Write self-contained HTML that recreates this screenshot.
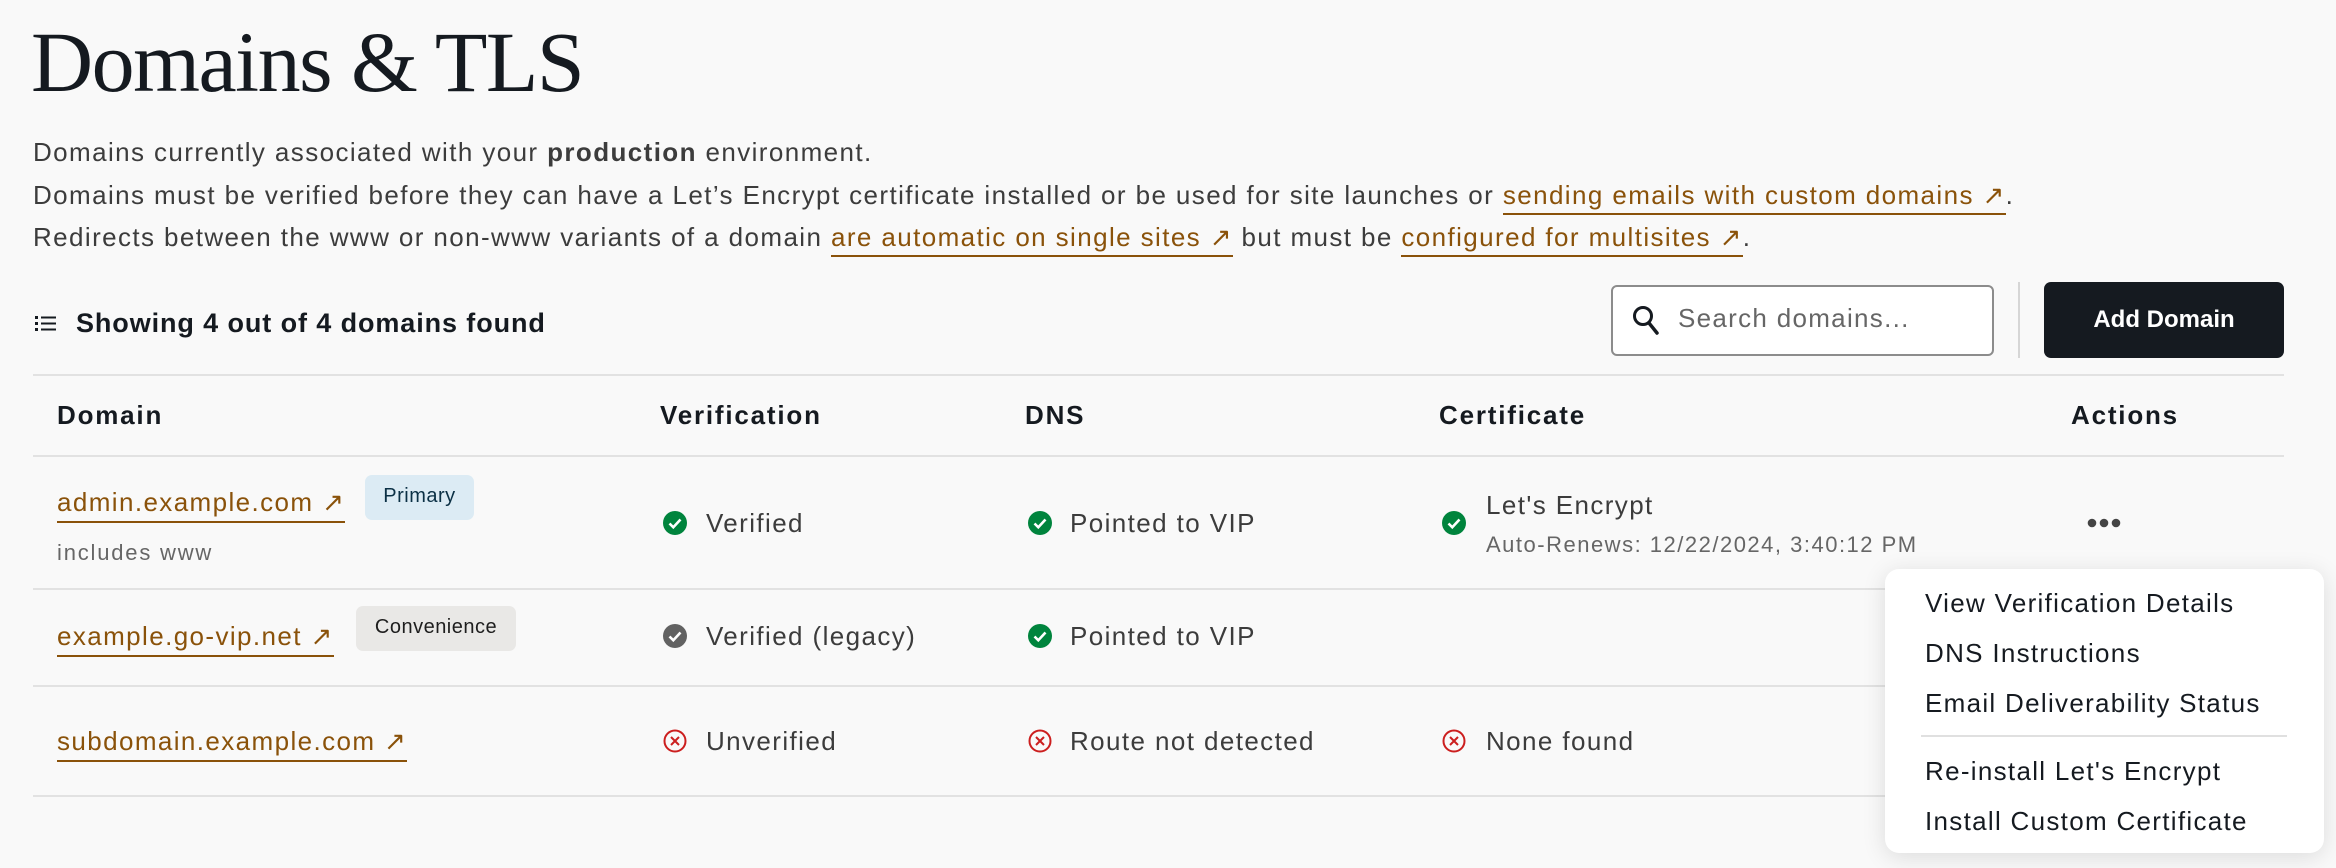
<!DOCTYPE html>
<html><head><meta charset="utf-8"><style>
*{margin:0;padding:0;box-sizing:border-box}
html,body{width:2336px;height:868px;overflow:hidden;background:#f9f9f9;font-family:"Liberation Sans",sans-serif;color:#1e1e1e}
.a{position:absolute;white-space:nowrap}
h1{position:absolute;left:31px;top:12px;font-family:"Liberation Serif",serif;font-weight:400;font-size:86px;color:#151a20;letter-spacing:-1.5px}
.p{font-size:26px;color:#3c3c3c;left:33px;letter-spacing:1.4px}
.l{color:#8a520a;border-bottom:2px solid #8a520a;padding-bottom:3px}
.th{font-weight:700;font-size:26px;color:#151a20;top:400px;letter-spacing:1.8px}
.hr{position:absolute;left:33px;width:2251px;height:2px;background:#e2e2e2}
.t{font-size:26px;color:#3c3c3c;letter-spacing:1.4px}
.ic{position:absolute;width:24px;height:24px}
.m{font-size:26px;color:#151a20;left:1925px;letter-spacing:1.3px}
</style></head><body>
<h1>Domains &amp; TLS</h1>
<div class="a p" style="top:137px">Domains currently associated with your <b>production</b> environment.</div>
<div class="a p" style="top:180px">Domains must be verified before they can have a Let’s Encrypt certificate installed or be used for site launches or <span class="l">sending emails with custom domains ↗</span>.</div>
<div class="a p" style="top:222px">Redirects between the www or non-www variants of a domain <span class="l">are automatic on single sites ↗</span> but must be <span class="l">configured for multisites ↗</span>.</div>

<svg class="a" style="left:35px;top:315px" width="22" height="16" viewBox="0 0 22 16"><g fill="#151a20"><rect x="0" y="1" width="3" height="3"/><rect x="0" y="7" width="3" height="3"/><rect x="0" y="13" width="3" height="3"/><rect x="6" y="1.5" width="15" height="2"/><rect x="6" y="7.5" width="15" height="2"/><rect x="6" y="13.5" width="15" height="2"/></g></svg>
<div class="a" style="left:76px;top:308px;font-size:27px;font-weight:700;color:#151a20;letter-spacing:0.9px">Showing 4 out of 4 domains found</div>

<div class="a" style="left:1611px;top:285px;width:383px;height:71px;border:2px solid #8c8c8c;border-radius:6px;background:#fff"></div>
<svg class="a" style="left:1632px;top:305px" width="28" height="32" viewBox="0 0 28 32"><circle cx="11" cy="11" r="8.5" fill="none" stroke="#151a20" stroke-width="3"/><line x1="17" y1="18" x2="25" y2="28" stroke="#151a20" stroke-width="3.5" stroke-linecap="round"/></svg>
<div class="a" style="left:1678px;top:303px;font-size:26px;color:#666;letter-spacing:1.3px">Search domains...</div>
<div class="a" style="left:2018px;top:282px;width:2px;height:76px;background:#d6d6d6"></div>
<div class="a" style="left:2044px;top:282px;width:240px;height:76px;background:#151a20;border-radius:7px;color:#fff;font-size:24px;font-weight:700;text-align:center;line-height:76px">Add Domain</div>

<div class="hr" style="top:374px"></div>
<div class="a th" style="left:57px">Domain</div>
<div class="a th" style="left:660px">Verification</div>
<div class="a th" style="left:1025px">DNS</div>
<div class="a th" style="left:1439px">Certificate</div>
<div class="a th" style="left:2071px">Actions</div>
<div class="hr" style="top:455px"></div>

<!-- row1 -->
<div class="a t" style="left:57px;top:487px"><span class="l" style="padding-bottom:4px">admin.example.com ↗</span></div>
<div class="a" style="left:365px;top:475px;width:109px;height:45px;background:#dcebf4;border-radius:7px;font-size:20px;color:#0b3045;text-align:center;line-height:43px;letter-spacing:0.5px">Primary</div>
<div class="a" style="left:57px;top:540px;font-size:22px;color:#666;letter-spacing:1.8px">includes www</div>
<svg class="ic" style="left:663px;top:511px" viewBox="0 0 24 24"><circle cx="12" cy="12" r="12" fill="#00843d"/><path d="M6.5 12.5l3.8 3.8L17.5 8.5" fill="none" stroke="#fff" stroke-width="2.6"/></svg>
<div class="a t" style="left:706px;top:508px">Verified</div>
<svg class="ic" style="left:1028px;top:511px" viewBox="0 0 24 24"><circle cx="12" cy="12" r="12" fill="#00843d"/><path d="M6.5 12.5l3.8 3.8L17.5 8.5" fill="none" stroke="#fff" stroke-width="2.6"/></svg>
<div class="a t" style="left:1070px;top:508px">Pointed to VIP</div>
<svg class="ic" style="left:1442px;top:511px" viewBox="0 0 24 24"><circle cx="12" cy="12" r="12" fill="#00843d"/><path d="M6.5 12.5l3.8 3.8L17.5 8.5" fill="none" stroke="#fff" stroke-width="2.6"/></svg>
<div class="a t" style="left:1486px;top:490px">Let's Encrypt</div>
<div class="a" style="left:1486px;top:532px;font-size:22px;color:#666;letter-spacing:1.5px">Auto-Renews: 12/22/2024, 3:40:12 PM</div>
<svg class="a" style="left:2087px;top:518px" width="34" height="10"><circle cx="5" cy="5" r="4.3" fill="#444"/><circle cx="17" cy="5" r="4.3" fill="#444"/><circle cx="29" cy="5" r="4.3" fill="#444"/></svg>
<div class="hr" style="top:588px"></div>

<!-- row2 -->
<div class="a t" style="left:57px;top:621px"><span class="l" style="padding-bottom:4px">example.go-vip.net ↗</span></div>
<div class="a" style="left:356px;top:606px;width:160px;height:45px;background:#e9e8e6;border-radius:7px;font-size:20px;color:#1e1e1e;text-align:center;line-height:43px;letter-spacing:0.5px">Convenience</div>
<svg class="ic" style="left:663px;top:624px" viewBox="0 0 24 24"><circle cx="12" cy="12" r="12" fill="#626262"/><path d="M6.5 12.5l3.8 3.8L17.5 8.5" fill="none" stroke="#fff" stroke-width="2.6"/></svg>
<div class="a t" style="left:706px;top:621px">Verified (legacy)</div>
<svg class="ic" style="left:1028px;top:624px" viewBox="0 0 24 24"><circle cx="12" cy="12" r="12" fill="#00843d"/><path d="M6.5 12.5l3.8 3.8L17.5 8.5" fill="none" stroke="#fff" stroke-width="2.6"/></svg>
<div class="a t" style="left:1070px;top:621px">Pointed to VIP</div>
<div class="hr" style="top:685px"></div>

<!-- row3 -->
<div class="a t" style="left:57px;top:726px"><span class="l" style="padding-bottom:4px">subdomain.example.com ↗</span></div>
<svg class="ic" style="left:663px;top:729px" viewBox="0 0 24 24"><circle cx="12" cy="12" r="10.5" fill="none" stroke="#cc1f1f" stroke-width="2"/><path d="M8 8l8 8M16 8l-8 8" stroke="#cc1f1f" stroke-width="2"/></svg>
<div class="a t" style="left:706px;top:726px">Unverified</div>
<svg class="ic" style="left:1028px;top:729px" viewBox="0 0 24 24"><circle cx="12" cy="12" r="10.5" fill="none" stroke="#cc1f1f" stroke-width="2"/><path d="M8 8l8 8M16 8l-8 8" stroke="#cc1f1f" stroke-width="2"/></svg>
<div class="a t" style="left:1070px;top:726px">Route not detected</div>
<svg class="ic" style="left:1442px;top:729px" viewBox="0 0 24 24"><circle cx="12" cy="12" r="10.5" fill="none" stroke="#cc1f1f" stroke-width="2"/><path d="M8 8l8 8M16 8l-8 8" stroke="#cc1f1f" stroke-width="2"/></svg>
<div class="a t" style="left:1486px;top:726px">None found</div>
<div class="hr" style="top:795px"></div>

<!-- menu -->
<div class="a" style="left:1885px;top:569px;width:439px;height:284px;background:#fff;border-radius:14px;box-shadow:0 4px 24px rgba(0,0,0,0.12)"></div>
<div class="a m" style="top:588px">View Verification Details</div>
<div class="a m" style="top:638px">DNS Instructions</div>
<div class="a m" style="top:688px">Email Deliverability Status</div>
<div class="a" style="left:1921px;top:735px;width:366px;height:2px;background:#e0e0e0"></div>
<div class="a m" style="top:756px">Re-install Let's Encrypt</div>
<div class="a m" style="top:806px">Install Custom Certificate</div>
</body></html>
